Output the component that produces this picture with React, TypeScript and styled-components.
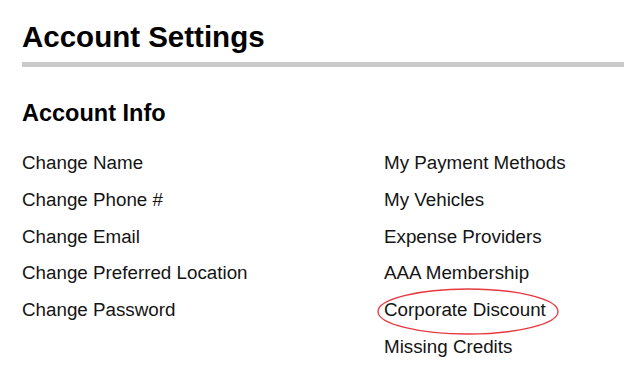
import { createGlobalStyle, styled } from 'styled-components';

const GlobalStyle = createGlobalStyle`
    html, body {
        margin: 0;
        padding: 0;
        background: #ffffff;
    }
    body {
        font-family: "Liberation Sans", Arial, sans-serif;
        color: #111111;
    }
`;

const leftLinks = ['Change Name', 'Change Phone #', 'Change Email', 'Change Preferred Location', 'Change Password'];

const rightLinks = [
    'My Payment Methods',
    'My Vehicles',
    'Expense Providers',
    'AAA Membership',
    'Corporate Discount',
    'Missing Credits',
];

const App = () => {
    return (
        <>
            <GlobalStyle />
            <Page>
                <Title>Account Settings</Title>
                <Rule />
                <Section>
                    <SectionTitle>Account Info</SectionTitle>
                    <Columns>
                        <LinkList>
                            {leftLinks.map((link) => (
                                <LinkItem key={link}>{link}</LinkItem>
                            ))}
                        </LinkList>
                        <LinkList>
                            {rightLinks.map((link) => (
                                <LinkItem key={link} $marked={link === 'Corporate Discount'}>
                                    {link}
                                    {link === 'Corporate Discount' && (
                                        <Circle viewBox="0 0 182 47" aria-hidden="true">
                                            <ellipse cx="91" cy="23.5" rx="90" ry="22.5" fill="none" stroke="#e8383f" strokeWidth="1.3" />
                                        </Circle>
                                    )}
                                </LinkItem>
                            ))}
                        </LinkList>
                    </Columns>
                </Section>
            </Page>
        </>
    );
};

export default App;

const Page = styled.div`
    padding: 19px 0 0 22px;
`;

const Title = styled.h1`
    margin: 0 0 7px;
    font-size: 29.5px;
    line-height: 36px;
    font-weight: 700;
    color: #000000;
`;

const Rule = styled.div`
    height: 5px;
    background-color: #c9c9c9;
`;

const Section = styled.section`
    padding-top: 32px;
`;

const SectionTitle = styled.h2`
    margin: 0 0 18px;
    font-size: 23.5px;
    line-height: 28px;
    font-weight: 700;
    color: #000000;
`;

const Columns = styled.div`
    display: grid;
    grid-template-columns: 362px 1fr;
`;

const LinkList = styled.ul`
    list-style: none;
    margin: 0;
    padding: 0;
`;

const LinkItem = styled.li<{ $marked?: boolean }>`
    position: ${({ $marked }) => ($marked ? 'relative' : 'static')};
    font-size: 18.8px;
    line-height: 36.8px;
    color: #141414;
    white-space: nowrap;
`;

const Circle = styled.svg`
    position: absolute;
    left: -7px;
    top: -4px;
    width: 182px;
    height: 47px;
    pointer-events: none;
`;
